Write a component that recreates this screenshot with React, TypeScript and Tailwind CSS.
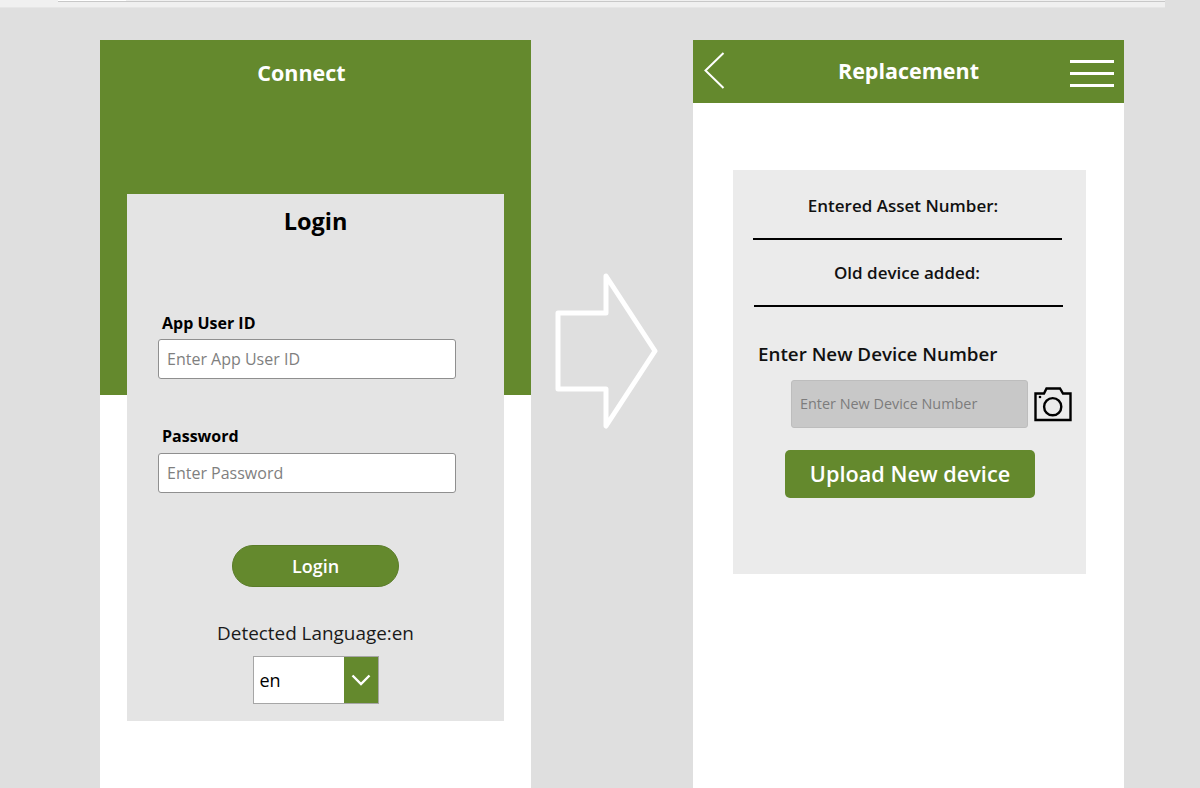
import React from "react";

const GREEN = "bg-[#64892d]";

const Field = ({ label, placeholder, className, inputGap }: { label: string; placeholder: string; className: string; inputGap: string }) => (
  <div className={className}>
    <div className="pl-[35px] text-[16px] leading-[20px] font-bold text-black">{label}</div>
    <div className={`ml-[31px] ${inputGap} flex h-[40px] w-[298px] items-center rounded-[3px] border border-[#8f8f8f] bg-white pl-[8px] text-[16px] text-[#7f7f7f]`}>
      {placeholder}
    </div>
  </div>
);

const LoginScreen = () => (
  <div className="h-[748px] w-[431px] shrink-0 bg-white">
    <div className={`h-[355px] ${GREEN} pt-[19px]`}>
      <div className="pr-[28px] text-center text-[21.5px] leading-[28px] font-bold text-white">Connect</div>
      <div className="ml-[27px] mt-[107px] h-[527px] w-[377px] bg-[#e4e4e4] pt-[11px]">
        <div className="text-center text-[23.5px] leading-[33px] font-bold text-black">Login</div>
        <Field label="App User ID" placeholder="Enter App User ID" className="mt-[75px]" inputGap="mt-[6px]" />
        <Field label="Password" placeholder="Enter Password" className="mt-[47px]" inputGap="mt-[7px]" />
        <div className={`mx-auto mt-[52px] flex h-[42px] w-[167px] items-center justify-center rounded-full border border-[#5a7c28] ${GREEN} text-[18px] font-semibold text-white`}>
          Login
        </div>
        <div className="mt-[34px] text-center text-[18.9px] leading-[25px] text-[#1a1a1a]">Detected Language:en</div>
        <div className="mx-auto mt-[10px] flex h-[48px] w-[126px] border border-[#a6a6a6] bg-white">
          <div className="flex flex-1 items-center pl-[6px] text-[18px] text-black">en</div>
          <div className={`flex w-[34px] items-center justify-center ${GREEN}`}>
            <svg width="20" height="12" viewBox="0 0 20 12" fill="none" stroke="white" strokeWidth="2.4">
              <path d="M1.5 1.5 L10 10 L18.5 1.5" />
            </svg>
          </div>
        </div>
      </div>
    </div>
  </div>
);

const BigArrow = () => (
  <svg className="ml-[24px] mt-[233px] shrink-0" width="104" height="156" viewBox="0 0 104 156" fill="none" stroke="white" strokeWidth="5" strokeLinejoin="round">
    <path d="M3 40 L51 40 L51 3 L100 78 L51 153 L51 116 L3 116 Z" />
  </svg>
);

const Underline = ({ className }: { className: string }) => <div className={`h-[2px] w-[309px] bg-black ${className}`} />;

const ReplacementScreen = () => (
  <div className="ml-[34px] h-[748px] w-[431px] shrink-0 bg-white">
    <div className={`relative flex h-[63px] items-center justify-center pb-[1px] ${GREEN}`}>
      <svg className="absolute left-[11px] top-[12px]" width="21" height="38" viewBox="0 0 21 38" fill="none" stroke="white" strokeWidth="2">
        <path d="M19.5 1 L1.5 18.5 L19.5 36" />
      </svg>
      <div className="text-[21.5px] leading-[28px] font-bold text-white">Replacement</div>
      <div className="absolute left-[377px] top-[20px] flex w-[44px] flex-col gap-[9px]">
        <div className="h-[3px] bg-white" />
        <div className="h-[3px] bg-white" />
        <div className="h-[3px] bg-white" />
      </div>
    </div>
    <div className="ml-[40px] mt-[67px] h-[404px] w-[353px] bg-[#ebebeb] pt-[25px]">
      <div className="pr-[13px] text-center text-[17px] leading-[22px] font-semibold text-[#111]">Entered Asset Number:</div>
      <Underline className="ml-[20px] mt-[21px]" />
      <div className="mt-[22px] pr-[5px] text-center text-[17px] leading-[22px] font-semibold text-[#111]">Old device added:</div>
      <Underline className="ml-[21px] mt-[21px]" />
      <div className="mt-[35px] pl-[25px] text-[18.8px] leading-[25px] font-semibold text-[#111]">Enter New Device Number</div>
      <div className="mt-[13px] flex items-center pl-[58px]">
        <div className="flex h-[48px] w-[237px] items-center rounded-[3px] border border-[#bdbdbd] bg-[#c8c8c8] pl-[8px] text-[14.4px] text-[#7c7c7c]">
          Enter New Device Number
        </div>
        <svg className="ml-[6px]" width="38" height="35" viewBox="0 0 38 35" fill="none" stroke="black" strokeWidth="2.4">
          <path d="M1.5 6.5 H10 L12.5 1.5 H26 L29 6.5 H36.5 V33 H1.5 Z" />
          <circle cx="18.7" cy="19.7" r="8.6" />
          <circle cx="6" cy="10" r="1.3" fill="black" stroke="none" />
        </svg>
      </div>
      <div className={`ml-[52px] mt-[22px] flex h-[48px] w-[250px] items-center justify-center rounded-[5px] pt-[1px] ${GREEN} text-[21.7px] font-semibold text-white`}>
        Upload New device
      </div>
    </div>
  </div>
);

export default function App() {
  return (
    <div className="h-[788px] w-[1200px] overflow-hidden bg-[#dfdfdf] font-['Open_Sans',sans-serif]">
      <div className="h-[8px] w-[1165px] border-b border-[#e6e6e6] bg-[#f0f0f0]">
        <div className="ml-[58px] flex h-[2px] border-b border-[#c8c8c8]">
          <div className="h-[1px] w-[68px] bg-white" />
        </div>
      </div>
      <div className="flex pl-[100px] pt-[32px]">
        <LoginScreen />
        <BigArrow />
        <ReplacementScreen />
      </div>
    </div>
  );
}
